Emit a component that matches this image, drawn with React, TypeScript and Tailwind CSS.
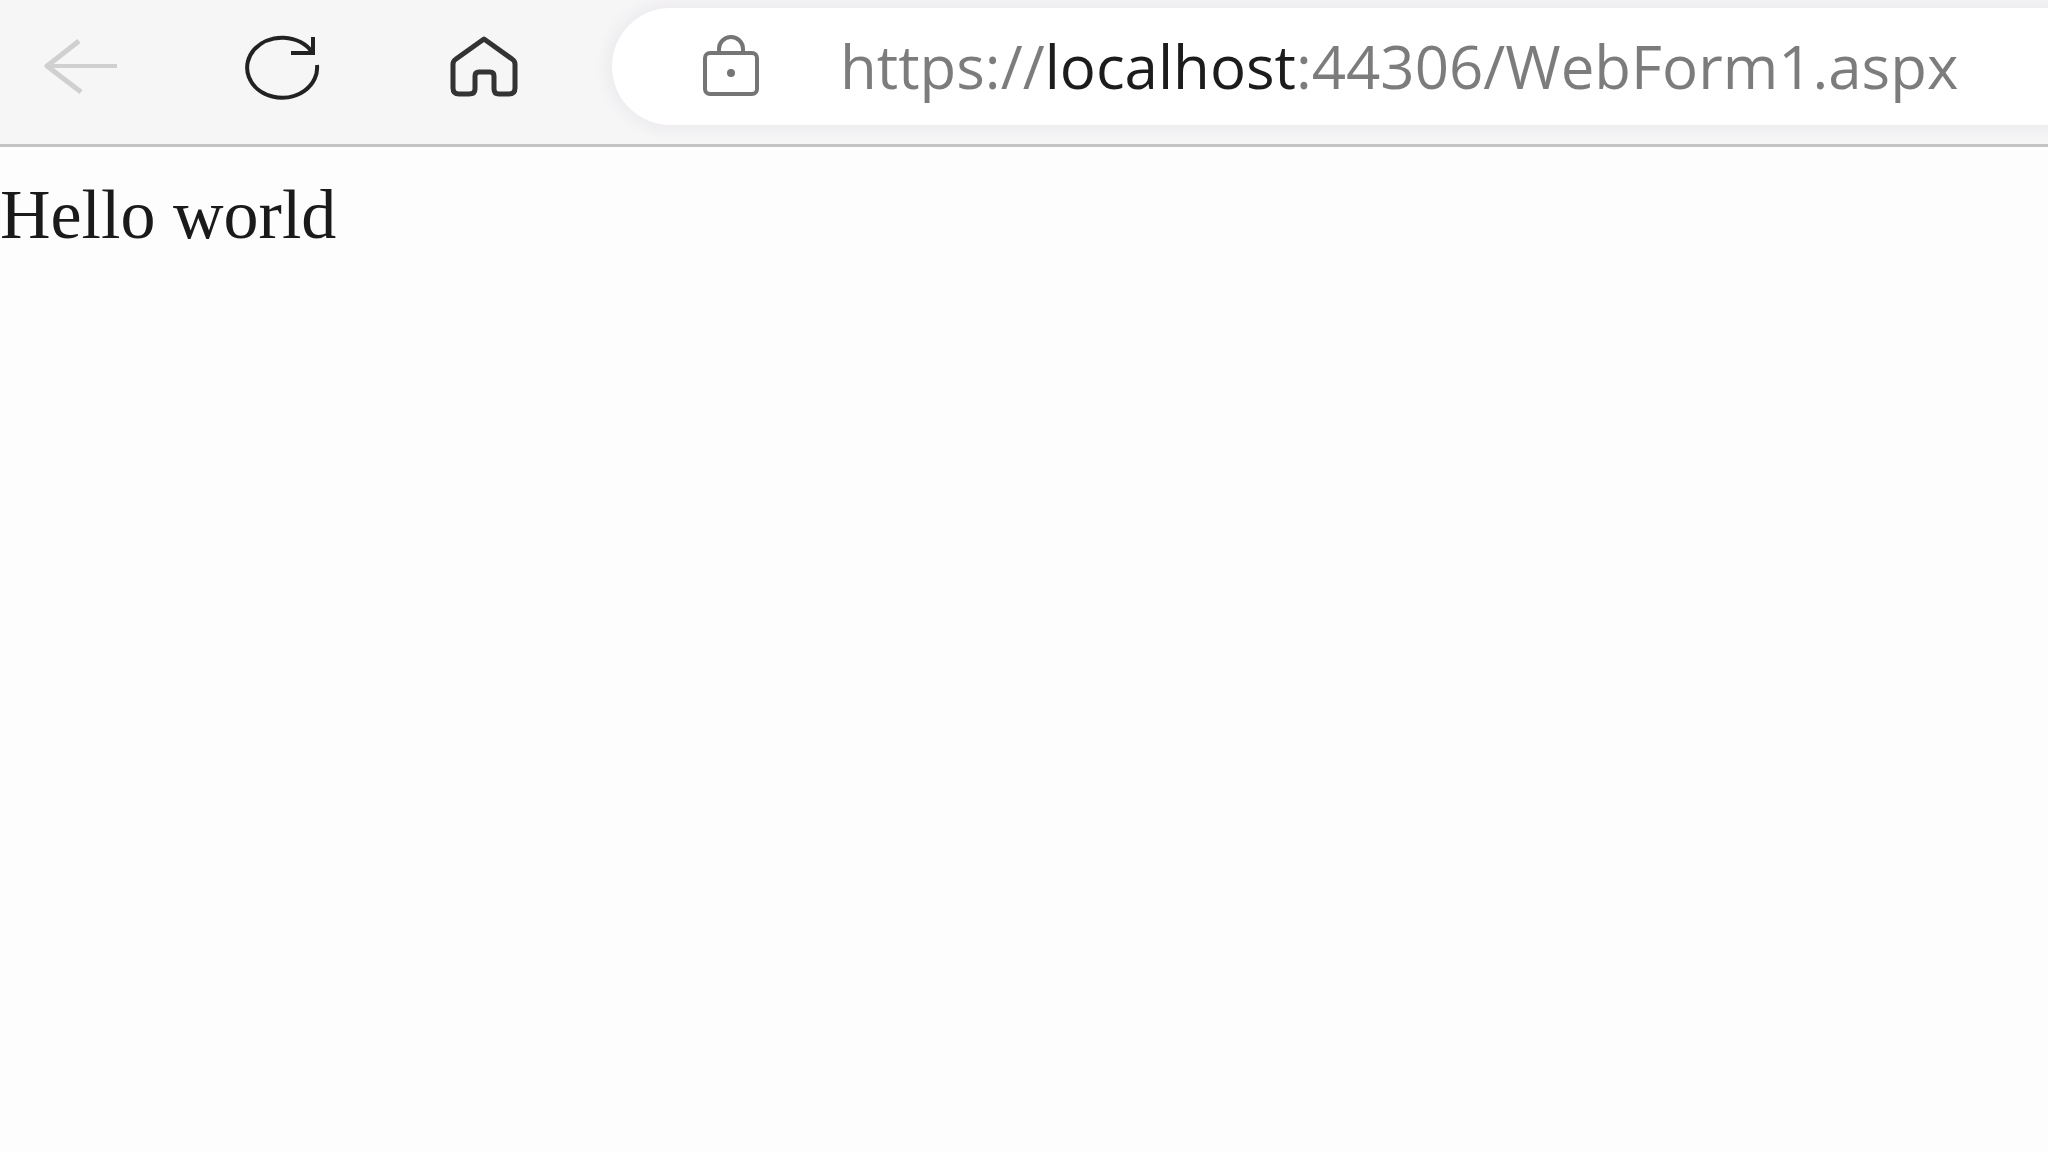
import React, { useState } from "react";

const BackIcon: React.FC = () => (
  <svg
    viewBox="0 0 76 66"
    className="w-[76px] h-[66px]"
    fill="none"
    stroke="#d0d0d0"
    strokeWidth="4"
    aria-hidden="true"
  >
    <path d="M35 8 L3 33 L37 59" strokeWidth="5" strokeLinejoin="round" />
    <path d="M6 33 H73" />
  </svg>
);

const RefreshIcon: React.FC = () => (
  <svg
    viewBox="0 0 76 66"
    className="w-[76px] h-[66px] overflow-visible"
    fill="none"
    stroke="#222222"
    strokeWidth="4"
    aria-hidden="true"
  >
    <path d="M72 32 A35 30 0 1 1 67 19" />
    <path d="M68 4 V20 H46" />
  </svg>
);

const HomeIcon: React.FC = () => (
  <svg
    viewBox="0 0 76 66"
    className="w-[76px] h-[66px]"
    fill="none"
    stroke="#333333"
    strokeWidth="5"
    strokeLinejoin="round"
    aria-hidden="true"
  >
    <path d="M38 6 L66 26 Q69 28 69 31 V55 Q69 61 63 61 H53 Q48 61 48 56 V43 Q48 39 44 39 H33 Q29 39 29 43 V56 Q29 61 23 61 H13 Q7 61 7 55 V31 Q7 28 10 26 Z" />
  </svg>
);

const LockIcon: React.FC = () => (
  <svg
    viewBox="0 0 58 66"
    className="w-[58px] h-[66px]"
    fill="none"
    stroke="#757575"
    strokeWidth="4"
    aria-hidden="true"
  >
    <rect x="3" y="20" width="52" height="41" rx="5" />
    <path d="M17 20 V16 A12 12 0 0 1 41 16 V20" />
    <circle cx="29" cy="40" r="4" fill="#757575" stroke="none" />
  </svg>
);

const App: React.FC = () => {
  const [url, setUrl] = useState("https://localhost:44306/WebForm1.aspx");

  return (
    <div className="min-h-screen bg-[#fdfdfd] overflow-hidden">
      <header className="flex items-center h-[147px] pt-2 pb-5 pl-11 bg-[#f6f6f6] border-b-3 border-[#c4c4c4]">
        <nav className="flex items-center gap-[125px] shrink-0">
          <button type="button" aria-label="Back" disabled>
            <BackIcon />
          </button>
          <button type="button" aria-label="Refresh">
            <RefreshIcon />
          </button>
          <button type="button" aria-label="Home">
            <HomeIcon />
          </button>
        </nav>

        <div className="flex items-center flex-1 min-w-0 h-[117px] ml-[90px] pl-[90px] rounded-l-full bg-white shadow-[0_0_10px_8px_#efedf0]">
          <button type="button" aria-label="Site information" className="shrink-0">
            <LockIcon />
          </button>
          {/* The host name is darker than the rest of the address */}
          <input
            type="text"
            aria-label="Address"
            value={url}
            onChange={(e) => setUrl(e.target.value)}
            spellCheck={false}
            className="flex-1 min-w-0 ml-[80px] text-[60px] leading-[80px] font-['Open_Sans',sans-serif] outline-none text-transparent caret-black bg-clip-text bg-[linear-gradient(to_right,#7c7c7c_208px,#1c1c1c_208px,#1c1c1c_456px,#7c7c7c_456px)]"
          />
        </div>
      </header>

      <main className="pt-7">
        <p className="text-[70px] leading-[80px] text-[#1a1a1a] font-['Liberation_Serif',serif]">
          Hello world
        </p>
      </main>
    </div>
  );
};

export default App;
